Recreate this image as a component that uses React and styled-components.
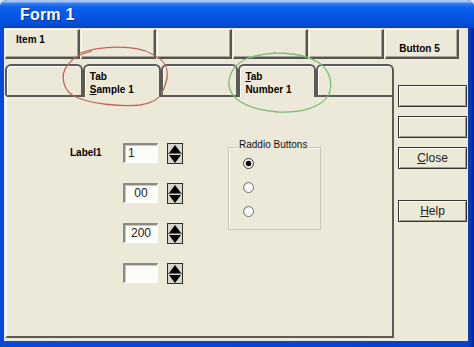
import { Fragment } from 'react';
import styled, { createGlobalStyle } from 'styled-components';

const GlobalStyle = createGlobalStyle`
  html, body {
    margin: 0;
    padding: 0;
    background: #dfe6f2;
  }
`;

const Window = styled.div`
  position: relative;
  width: 474px;
  height: 347px;
  box-sizing: border-box;
  display: flex;
  flex-direction: column;
  overflow: hidden;
  border-radius: 7px 7px 0 0;
  background: linear-gradient(to right, #0a45d6 0, #0b4ad9 4px, #0840d0 468px, #062fae 472px, #03208a 474px);
  font-family: 'Liberation Sans', Arial, sans-serif;
  color: #000;
`;

const TitleBar = styled.div`
  height: 28px;
  flex: none;
  display: flex;
  align-items: center;
  padding: 1px 0 0 20px;
  box-sizing: border-box;
  background: linear-gradient(
    to bottom,
    #a8c2ee 0,
    #a8c2ee 2px,
    #3a82f4 3px,
    #0e62ec 7px,
    #0656e4 16px,
    #0450dc 23px,
    #0343c4 28px
  );
  color: #fff;
  font-weight: bold;
  font-size: 16px;
  letter-spacing: 0.2px;
  text-shadow: 1px 1px 0 #0a2f8a;
`;

const Body = styled.div`
  flex: 1;
  display: flex;
  flex-direction: column;
  margin: 0 6px 6px 4px;
  padding: 1px 0 3px 1px;
  background: #ece9d8;
`;

const Toolbar = styled.div`
  display: flex;
  gap: 1px;
  height: 30px;
`;

const ToolButton = styled.div`
  width: ${(p) => p.$width || 75}px;
  height: 30px;
  box-sizing: border-box;
  display: flex;
  justify-content: ${(p) => (p.$center ? 'center' : 'flex-start')};
  align-items: ${(p) => (p.$center ? 'flex-end' : 'flex-start')};
  padding: ${(p) => (p.$center ? '0 4px 2px 0' : '3px 0 0 10px')};
  border-style: solid;
  border-width: 1px 2px 2px 1px;
  border-color: #ffffff #56554f #56554f #ffffff;
  box-shadow: inset -1px -1px #a9a698;
  background: #ece9d8;
  font-weight: bold;
  font-size: 10px;
  line-height: 13px;
`;

const Main = styled.div`
  flex: 1;
  display: flex;
  gap: 4px;
  margin-top: 5px;
`;

const TabControl = styled.div`
  width: 389px;
  display: flex;
  flex-direction: column;
`;

const TabStrip = styled.div`
  display: flex;
  height: 31px;
  flex: none;
`;

const Tab = styled.div`
  flex: 1;
  box-sizing: border-box;
  border: 2px solid #5b5a55;
  border-bottom: 0;
  border-radius: 6px 6px 0 0;
  background: #ece9d8;
  box-shadow: inset 1px 1px #ffffff;
  padding: 4px 0 0 5px;
  font-weight: bold;
  font-size: 10px;
  line-height: 13px;
  ${(p) =>
    p.$open &&
    `
    position: relative;
    z-index: 1;
    margin-bottom: -2px;
  `}

  u {
    text-decoration-thickness: 1px;
    text-underline-offset: 1px;
  }
`;

const Panel = styled.div`
  flex: 1;
  display: flex;
  align-items: flex-start;
  box-sizing: border-box;
  border-style: solid;
  border-width: 2px;
  border-color: #5b5a55 #5b5a55 #5b5a55 #f6f5ef;
  padding: 46px 0 0 63px;
`;

const SpinGrid = styled.div`
  display: grid;
  grid-template-columns: 44px 35px 16px;
  column-gap: 9px;
  row-gap: 19px;
  align-items: start;
`;

const Label = styled.div`
  font-weight: bold;
  font-size: 10px;
  line-height: 20px;
`;

const TextBox = styled.div`
  grid-column: 2;
  width: 35px;
  height: 20px;
  box-sizing: border-box;
  border-style: solid;
  border-width: 2px 1px 1px 2px;
  border-color: #8c8a82 #ffffff #ffffff #8c8a82;
  box-shadow: inset 1px 1px #c9c7bd;
  background: #fcfcf9;
  padding: 0 3px;
  font-size: 12px;
  line-height: 17px;
  text-align: ${(p) => p.$align || 'center'};
  color: #222;
`;

const SpinBox = styled.div`
  grid-column: 3;
  width: 16px;
  height: 21px;
  box-sizing: border-box;
  border: 1px solid #2e2e2c;
  background: #d9d7cd;
  display: flex;
  flex-direction: column;
`;

const SpinHalf = styled.div`
  flex: 1;
  display: flex;
  align-items: center;
  justify-content: center;
  ${(p) => p.$top && 'border-bottom: 1px solid #6b6a64;'}

  svg {
    display: block;
  }
`;

const Group = styled.div`
  position: relative;
  width: 93px;
  height: 83px;
  box-sizing: border-box;
  margin: 4px 0 0 45px;
  border: 1px solid #c9c6b6;
  box-shadow: inset 1px 1px #fbfbf7;
  display: flex;
  flex-direction: column;
  gap: 13px;
  padding: 10px 0 0 14px;
`;

const Legend = styled.span`
  position: absolute;
  top: -9px;
  left: 8px;
  padding: 0 2px;
  background: #ece9d8;
  font-size: 10px;
  line-height: 12px;
  color: #111;
`;

const Radio = styled.div`
  width: 11px;
  height: 11px;
  box-sizing: border-box;
  border-radius: 50%;
  border: 1px solid ${(p) => (p.$checked ? '#3c3c38' : '#72706a')};
  background: ${(p) =>
    p.$checked
      ? 'radial-gradient(circle, #000 0 2.6px, #f5f4ee 3.1px)'
      : 'radial-gradient(circle at 62% 62%, #ffffff 0 45%, #cfccc0 100%)'};
`;

const SideColumn = styled.div`
  width: 69px;
  display: flex;
  flex-direction: column;
  gap: 9px;
  padding-top: 21px;
`;

const SideButton = styled.div`
  height: 22px;
  box-sizing: border-box;
  margin-top: ${(p) => p.$push || 0}px;
  border: 1px solid #353530;
  box-shadow: inset 1px 1px #ffffff, inset -1px -1px #9e9c90;
  background: #ece9d8;
  display: flex;
  align-items: center;
  justify-content: center;
  font-size: 12px;
  color: #222;

  u {
    text-decoration-thickness: 1px;
    text-underline-offset: 1px;
  }
`;

const Scribbles = styled.svg`
  position: absolute;
  top: 0;
  left: 0;
  pointer-events: none;
`;

const Arrow = ({ down }) => (
  <svg width="12" height="8" viewBox="0 0 12 8">
    <path d={down ? 'M0 0 L12 0 L6 8 Z' : 'M6 0 L12 8 L0 8 Z'} fill="#000" />
  </svg>
);

const Spinner = () => (
  <SpinBox>
    <SpinHalf $top>
      <Arrow />
    </SpinHalf>
    <SpinHalf>
      <Arrow down />
    </SpinHalf>
  </SpinBox>
);

const spinValues = [
  { value: '1', align: 'left' },
  { value: '00' },
  { value: '200' },
  { value: '' },
];

export default function App() {
  return (
    <>
      <GlobalStyle />
      <Window>
        <TitleBar>Form 1</TitleBar>
        <Body>
          <Toolbar>
            <ToolButton>Item 1</ToolButton>
            <ToolButton />
            <ToolButton />
            <ToolButton />
            <ToolButton />
            <ToolButton $width={74} $center>
              Button 5
            </ToolButton>
          </Toolbar>
          <Main>
            <TabControl>
              <TabStrip>
                <Tab />
                <Tab $open>
                  Tab
                  <br />
                  <u>S</u>ample 1
                </Tab>
                <Tab />
                <Tab $open>
                  <u>T</u>ab
                  <br />
                  Number 1
                </Tab>
                <Tab />
              </TabStrip>
              <Panel>
                <SpinGrid>
                  <Label>Label1</Label>
                  {spinValues.map((s, i) => (
                    <Fragment key={i}>
                      <TextBox $align={s.align}>{s.value}</TextBox>
                      <Spinner />
                    </Fragment>
                  ))}
                </SpinGrid>
                <Group>
                  <Legend>Raddio Buttons</Legend>
                  <Radio $checked />
                  <Radio />
                  <Radio />
                </Group>
              </Panel>
            </TabControl>
            <SideColumn>
              <SideButton />
              <SideButton />
              <SideButton>
                <u>C</u>lose
              </SideButton>
              <SideButton $push={22}>
                <u>H</u>elp
              </SideButton>
            </SideColumn>
          </Main>
        </Body>
        <Scribbles width="474" height="347" viewBox="0 0 474 347">
          <path
            d="M80 53 C100 46 135 44 152 54 C165 60 170 70 166 82 C162 96 158 102 140 105 C120 107 95 104 78 98 C62 92 60 75 67 66 C72 58 78 55 92 51"
            fill="none"
            stroke="#c4635c"
            strokeWidth="1.3"
          />
          <path
            d="M250 58 C270 50 300 52 318 62 C330 70 334 84 328 96 C320 108 300 113 278 112 C255 110 236 104 230 90 C226 78 233 64 248 58 C258 54 268 54 276 53"
            fill="none"
            stroke="#78bd78"
            strokeWidth="1.3"
          />
        </Scribbles>
      </Window>
    </>
  );
}
